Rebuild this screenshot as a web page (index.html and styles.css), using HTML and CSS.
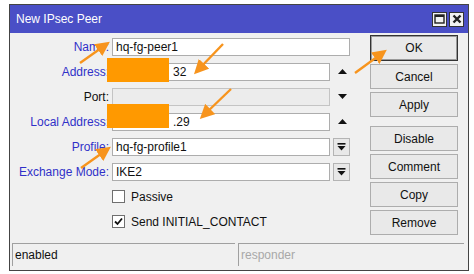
FILE: index.html
```html
<!DOCTYPE html>
<html lang="en">
<head>
    <meta charset="UTF-8">
    <title>New IPsec Peer</title>
    <link rel="stylesheet" href="styles.css">
</head>
<body>
    <div class="window">
        <div class="titlebar">
            <span class="title">New IPsec Peer</span>
            <div class="title-btns">
                <span class="tbtn">
                    <svg width="11" height="10" viewBox="0 0 11 10"><rect x="1" y="1" width="9" height="8" fill="none" stroke="#222" stroke-width="1.4"/><rect x="1" y="1" width="9" height="2" fill="#222"/></svg>
                </span>
                <span class="tbtn">
                    <svg width="10" height="10" viewBox="0 0 10 10"><path d="M1.5 1.5 L8.5 8.5 M8.5 1.5 L1.5 8.5" stroke="#222" stroke-width="2.4"/></svg>
                </span>
            </div>
        </div>

        <div class="content">
            <div class="form">
                <div class="row">
                    <label class="label req">Name:</label>
                    <div class="field wide">hq-fg-peer1</div>
                </div>
                <div class="row">
                    <label class="label req">Address:</label>
                    <div class="field masked">32</div>
                    <span class="ctl"><svg width="9" height="5" viewBox="0 0 9 5"><polygon points="0,5 9,5 4.5,0" fill="#111"/></svg></span>
                </div>
                <div class="row">
                    <label class="label">Port:</label>
                    <div class="field disabled"></div>
                    <span class="ctl"><svg width="9" height="5" viewBox="0 0 9 5"><polygon points="0,0 9,0 4.5,5" fill="#111"/></svg></span>
                </div>
                <div class="row">
                    <label class="label req">Local Address:</label>
                    <div class="field masked">.29</div>
                    <span class="ctl"><svg width="9" height="5" viewBox="0 0 9 5"><polygon points="0,5 9,5 4.5,0" fill="#111"/></svg></span>
                </div>
                <div class="row">
                    <label class="label req">Profile:</label>
                    <div class="field">hq-fg-profile1</div>
                    <span class="dropbtn"><svg width="9" height="8" viewBox="0 0 9 8"><rect x="0.5" y="0" width="8" height="1.6" fill="#111"/><polygon points="0.5,3 8.5,3 4.5,7.5" fill="#111"/></svg></span>
                </div>
                <div class="row">
                    <label class="label req">Exchange Mode:</label>
                    <div class="field">IKE2</div>
                    <span class="dropbtn"><svg width="9" height="8" viewBox="0 0 9 8"><rect x="0.5" y="0" width="8" height="1.6" fill="#111"/><polygon points="0.5,3 8.5,3 4.5,7.5" fill="#111"/></svg></span>
                </div>
                <div class="check-row">
                    <span class="checkbox"></span>
                    <span>Passive</span>
                </div>
                <div class="check-row">
                    <span class="checkbox">
                        <svg width="11" height="11" viewBox="0 0 11 11"><path d="M2 5.5 L4.5 8 L9 2.5" fill="none" stroke="#111" stroke-width="1.8"/></svg>
                    </span>
                    <span>Send INITIAL_CONTACT</span>
                </div>
            </div>

            <div class="buttons">
                <button class="btn default">OK</button>
                <button class="btn">Cancel</button>
                <button class="btn">Apply</button>
                <button class="btn spaced">Disable</button>
                <button class="btn">Comment</button>
                <button class="btn">Copy</button>
                <button class="btn">Remove</button>
            </div>
        </div>

        <div class="statusbar">
            <div class="status-field first">enabled</div>
            <div class="status-field muted">responder</div>
        </div>
    </div>

    <!-- annotations drawn over the screenshot -->
    <svg class="annotations" width="474" height="274" viewBox="0 0 474 274">
        <defs>
            <marker id="head" markerWidth="6" markerHeight="6" refX="3" refY="3" orient="auto" markerUnits="strokeWidth">
                <polygon points="0,0 6,3 0,6" fill="#f7941d"/>
            </marker>
        </defs>
        <rect x="107" y="58" width="62" height="24" fill="#ff9900"/>
        <rect x="107" y="104" width="62" height="24" fill="#ff9900"/>
        <g stroke="#f7941d" stroke-width="2.4" fill="none" marker-end="url(#head)">
            <line x1="80" y1="63" x2="104" y2="46"/>
            <line x1="223" y1="44" x2="199" y2="69"/>
            <line x1="231" y1="89" x2="205" y2="114"/>
            <line x1="81" y1="168" x2="105" y2="151"/>
            <line x1="355" y1="73" x2="381" y2="54"/>
        </g>
    </svg>
</body>
</html>
```

FILE: styles.css
```css
body {
    margin: 0;
    position: relative;
    width: 474px;
    height: 274px;
    background: #fff;
    font-family: "Liberation Sans", Arial, sans-serif;
    font-size: 12px;
    color: #111;
}

.window {
    box-sizing: border-box;
    margin: 4px 0 0 9px;
    width: 460px;
    height: 267px;
    border: 1px solid #444;
    background: #f0f0f0;
    display: flex;
    flex-direction: column;
}

.titlebar {
    height: 28px;
    background: #4a4fc6;
    display: flex;
    align-items: center;
    padding: 0 4px 0 6px;
}

.title {
    color: #fff;
    font-size: 12px;
    flex: 1;
}

.title-btns {
    display: flex;
    gap: 2px;
}

.tbtn {
    box-sizing: border-box;
    width: 15px;
    height: 15px;
    border: 1px solid #333;
    background: #f2f2f2;
    display: flex;
    align-items: center;
    justify-content: center;
}

.content {
    flex: 1;
    display: flex;
}

.form {
    padding-top: 1px;
    width: 350px;
}

.row {
    height: 25px;
    display: flex;
    align-items: center;
}

.label {
    width: 99px;
    margin-right: 3px;
    text-align: right;
    white-space: nowrap;
}

.label.req {
    color: #3030c8;
}

.field {
    box-sizing: border-box;
    width: 218px;
    height: 18px;
    border: 1px solid #adadad;
    background: #fff;
    padding: 0 3px;
    line-height: 16px;
    white-space: nowrap;
}

.field.wide {
    width: 238px;
}

.field.masked {
    padding-left: 60px;
}

.field.disabled {
    background: #ececec;
    border-color: #c4c4c4;
}

.ctl {
    width: 24px;
    display: flex;
    justify-content: center;
}

.dropbtn {
    box-sizing: border-box;
    margin-left: 3px;
    width: 17px;
    height: 18px;
    border: 1px solid #b4b4b4;
    background: #e8e8e8;
    display: flex;
    align-items: center;
    justify-content: center;
}

.check-row {
    height: 25px;
    display: flex;
    align-items: center;
    padding-left: 102px;
    gap: 6px;
}

.checkbox {
    box-sizing: border-box;
    width: 13px;
    height: 13px;
    border: 1px solid #6f6f6f;
    background: #fff;
    display: flex;
    align-items: center;
    justify-content: center;
}

.buttons {
    margin-left: auto;
    margin-right: 10px;
    padding-top: 2px;
    width: 88px;
    display: flex;
    flex-direction: column;
    gap: 3px;
}

.btn {
    height: 25px;
    border: 1px solid #adadad;
    background: #e9e9e9;
    font-family: inherit;
    font-size: 12px;
    color: #111;
    padding: 0;
}

.btn.default {
    height: 26px;
    border: 1px solid #333;
    box-shadow: inset 0 0 0 1px #9a9a9a;
}

.btn.spaced {
    margin-top: 6px;
}

.statusbar {
    height: 23px;
    margin: 0 4px 4px 2px;
    display: flex;
    gap: 3px;
}

.status-field {
    flex: 1;
    border-top: 1px solid #a0a0a0;
    border-left: 1px solid #a0a0a0;
    padding: 0 0 0 2px;
    display: flex;
    align-items: center;
}

.status-field.first {
    flex: 0 0 220px;
}

.status-field.muted {
    color: #a8a8a8;
}

.annotations {
    position: absolute;
    left: 0;
    top: 0;
    pointer-events: none;
}
```
